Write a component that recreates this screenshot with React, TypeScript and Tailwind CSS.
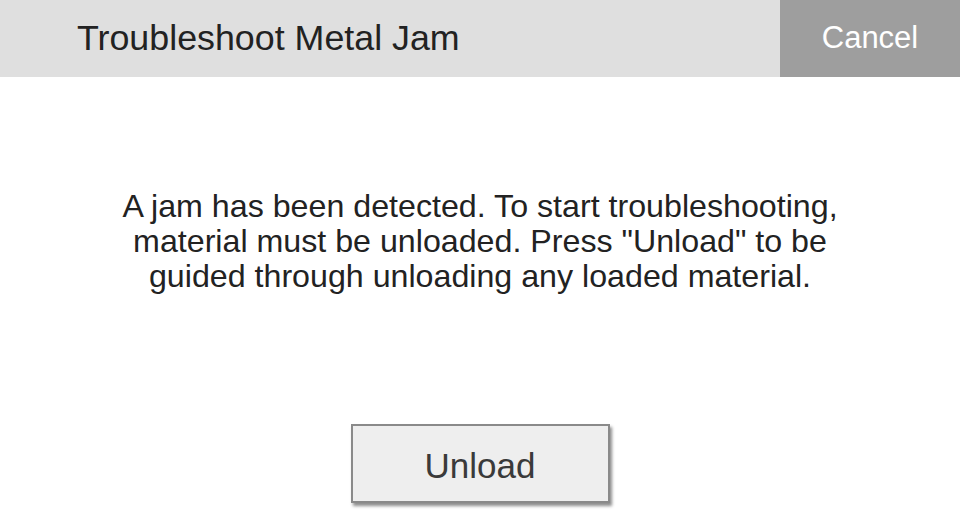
export default function App() {
  return (
    <div className="w-[960px] h-[524px] bg-white flex flex-col overflow-hidden" style={{ fontFamily: '"Liberation Sans", Arial, sans-serif' }}>
      <div className="h-[77px] flex bg-[#dfdfdf]">
        <div className="flex-1 flex items-center pl-[77px] text-[35.8px] text-[#222] leading-none">
          Troubleshoot Metal Jam
        </div>
        <button className="w-[180px] h-full bg-[#9e9e9e] text-white text-[31px] leading-none flex items-center justify-center pb-[2px]">
          Cancel
        </button>
      </div>
      <div className="flex-1 flex flex-col items-center pt-[112px]">
        <p className="text-center text-[32.2px] leading-[35px] text-[#222]">
          A jam has been detected. To start troubleshooting,
          <br />
          material must be unloaded. Press "Unload" to be
          <br />
          guided through unloading any loaded material.
        </p>
        <button className="mt-[130px] w-[259px] h-[79px] bg-[#eeeeee] border-2 border-[#8a8a8a] shadow-[2px_3px_3px_rgba(0,0,0,0.45)] text-[35px] text-[#3a3a3a] leading-none flex items-center justify-center pt-[3px]">
          Unload
        </button>
      </div>
    </div>
  );
}
